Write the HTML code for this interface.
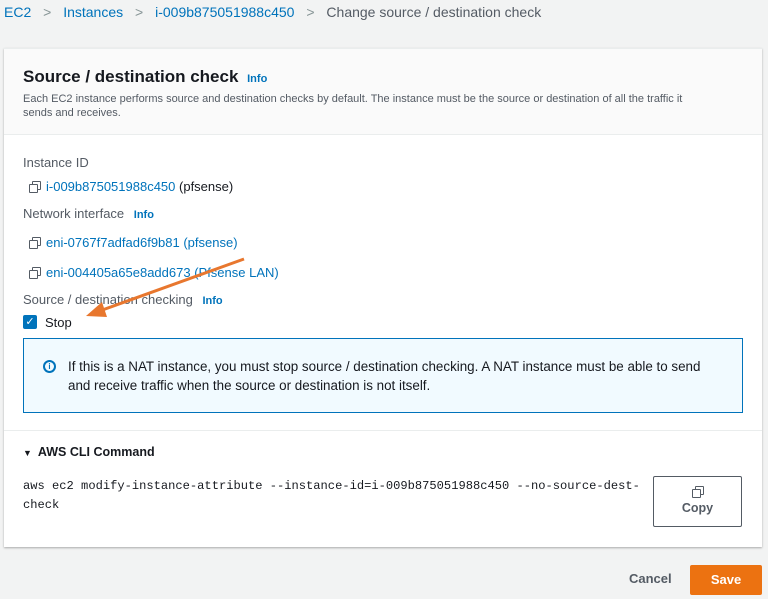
<!DOCTYPE html>
<html><head><meta charset="utf-8"><style>
*{box-sizing:border-box;margin:0;padding:0}
body{width:768px;height:599px;background:#f2f3f3;font-family:"Liberation Sans",sans-serif;color:#16191f;position:relative;overflow:hidden;font-size:13px}
.a{position:absolute;white-space:nowrap}
.lnk{color:#0073bb}
.g{color:#545b64}
.info{color:#0073bb;font-weight:bold;font-size:11px}
.card{position:absolute;left:4px;top:48px;width:758px;height:499px;background:#fff;box-shadow:0 1px 2px rgba(0,0,0,.3);border-top:1px solid #eaeded}
.hdr{position:absolute;left:0;top:0;width:758px;height:86px;background:#fafafa;border-bottom:1px solid #eaeded}
.cp{display:inline-block;width:11px;height:11px;position:relative;margin-right:6px;vertical-align:-1px}
.cp:before{content:"";position:absolute;left:3px;top:0;width:7px;height:7px;border:1.5px solid #545b64;border-radius:1px}
.cp:after{content:"";position:absolute;left:0;top:3px;width:7px;height:7px;border:1.5px solid #545b64;background:#fff;border-radius:1px}
</style></head><body>
<div class="a lnk" style="left:4px;top:4px;font-size:14px">EC2 <span style="color:#879596;margin:0 8px">&gt;</span> Instances <span style="color:#879596;margin:0 8px">&gt;</span> i-009b875051988c450 <span style="color:#879596;margin:0 8px">&gt;</span> <span class="g">Change source / destination check</span></div>
<div class="card">
<div class="hdr"></div>
<div class="a" style="left:19px;top:18px;font-size:17px;font-weight:bold">Source / destination check <span class="info" style="margin-left:4px">Info</span></div>
<div class="a g" style="left:19px;top:43px;font-size:11px;line-height:14px;white-space:normal;width:690px">Each EC2 instance performs source and destination checks by default. The instance must be the source or destination of all the traffic it sends and receives.</div>
<div class="a g" style="left:19px;top:106px">Instance ID</div>
<div class="a lnk" style="left:25px;top:130px"><span class="cp"></span>i-009b875051988c450 <span style="color:#16191f">(pfsense)</span></div>
<div class="a g" style="left:19px;top:157px">Network interface <span class="info" style="margin-left:6px">Info</span></div>
<div class="a lnk" style="left:25px;top:186px"><span class="cp"></span>eni-0767f7adfad6f9b81 (pfsense)</div>
<div class="a lnk" style="left:25px;top:216px"><span class="cp"></span>eni-004405a65e8add673 (Pfsense LAN)</div>
<div class="a g" style="left:19px;top:243px">Source / destination checking <span class="info" style="margin-left:6px">Info</span></div>
<div class="a" style="left:19px;top:266px;width:14px;height:14px;background:#0073bb;border-radius:2px;color:#fff;font-size:11px;text-align:center;line-height:14px">✓</div>
<div class="a" style="left:41px;top:266px">Stop</div>
<div class="a" style="left:19px;top:289px;width:720px;height:75px;background:#f1faff;border:1.5px solid #0073bb"></div>
<div class="a" style="left:39px;top:311px;width:13px;height:13px;border:2px solid #0073bb;border-radius:50%;color:#0073bb;font-size:8px;font-weight:bold;text-align:center;line-height:9px">i</div>
<div class="a" style="left:64px;top:308px;line-height:19px;font-size:13.4px">If this is a NAT instance, you must stop source / destination checking. A NAT instance must be able to send<br>and receive traffic when the source or destination is not itself.</div>
<div class="a" style="left:0;top:381px;width:758px;border-top:1px solid #eaeded"></div>
<div class="a" style="left:19px;top:396px;font-weight:bold;font-size:12.5px;color:#16191f"><span style="font-size:9px;margin-right:6px">▼</span>AWS CLI Command</div>
<div class="a" style="left:19px;top:428px;font-family:'Liberation Mono',monospace;font-size:12.1px;line-height:19px;color:#16191f">aws ec2 modify-instance-attribute --instance-id=i-009b875051988c450 --no-source-dest-<br>check</div>
<div class="a" style="left:649px;top:427px;width:89px;height:51px;border:1px solid #545b64;border-radius:2px;text-align:center;font-weight:bold;color:#545b64;font-size:12.5px"><div style="margin-top:8px"><span class="cp" style="margin:0"></span></div><div style="margin-top:2px">Copy</div></div>
</div>
<div class="a" style="left:629px;top:571px;font-weight:bold;color:#545b64;font-size:13px">Cancel</div>
<div class="a" style="left:690px;top:565px;width:72px;height:30px;background:#ec7211;color:#fff;font-weight:bold;text-align:center;line-height:30px;border-radius:2px">Save</div>
<svg class="a" style="left:80px;top:255px" width="190" height="65"><line x1="164" y1="4" x2="14" y2="58" stroke="#e8772e" stroke-width="3"/><polygon points="6,61 22,47 27,62" fill="#e8772e"/></svg>
</body></html>
